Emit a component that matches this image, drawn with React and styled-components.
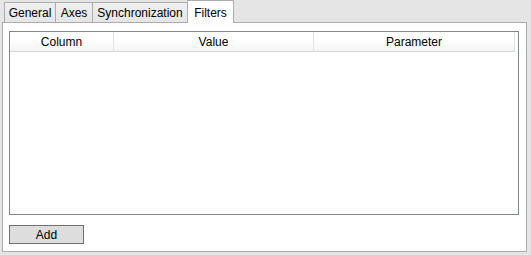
import React from "react";
import styled, { createGlobalStyle } from "styled-components";

const GlobalStyle = createGlobalStyle`
  html, body {
    margin: 0;
    padding: 0;
    background: #e5e5e5;
  }
  * {
    box-sizing: border-box;
  }
`;

const tabs = [
  { label: "General", width: 52 },
  { label: "Axes", width: 38 },
  { label: "Synchronization", width: 96 },
  { label: "Filters", width: 47, active: true },
];

const columns = [
  { label: "Column", width: 104 },
  { label: "Value", width: 200 },
  { label: "Parameter", width: 201 },
];

export default function App() {
  return (
    <>
      <GlobalStyle />
      <Window>
        <TabStrip>
          {tabs.map((t) => (
            <Tab key={t.label} $width={t.width} $active={t.active}>
              {t.label}
            </Tab>
          ))}
        </TabStrip>
        <Panel>
          <Grid>
            <HeaderRow>
              {columns.map((c) => (
                <HeaderCell key={c.label} $width={c.width}>
                  {c.label}
                </HeaderCell>
              ))}
            </HeaderRow>
            <GridBody />
          </Grid>
          <AddButton>Add</AddButton>
        </Panel>
      </Window>
    </>
  );
}

const Window = styled.div`
  width: 531px;
  height: 255px;
  padding-left: 2px;
  font-family: "Segoe UI", "Liberation Sans", sans-serif;
  font-size: 12px;
  color: #000;
`;

const TabStrip = styled.div`
  display: flex;
  align-items: flex-end;
  height: 22px;
  padding-left: 2px;
`;

const Tab = styled.div`
  position: relative;
  z-index: ${(p) => (p.$active ? 1 : 0)};
  display: flex;
  align-items: center;
  justify-content: center;
  width: ${(p) => p.$width}px;
  height: ${(p) => (p.$active ? 23 : 20)}px;
  margin-left: -1px;
  margin-bottom: ${(p) => (p.$active ? -1 : 0)}px;
  padding-top: 1px;
  border: 1px solid #acacac;
  border-bottom: none;
  background: ${(p) =>
    p.$active ? "#fff" : "linear-gradient(#f0f0f0, #e5e5e5)"};
  white-space: nowrap;
  &:first-child {
    margin-left: 0;
  }
`;

const Panel = styled.div`
  display: flex;
  flex-direction: column;
  width: 525px;
  height: 230px;
  padding: 8px 7px 7px 6px;
  border: 1px solid #acacac;
  background: #fff;
`;

const Grid = styled.div`
  display: flex;
  flex-direction: column;
  width: 510px;
  height: 184px;
  border: 1px solid #828790;
  background: #fff;
`;

const HeaderRow = styled.div`
  display: flex;
  height: 20px;
`;

const HeaderCell = styled.div`
  display: flex;
  align-items: center;
  justify-content: center;
  width: ${(p) => p.$width}px;
  border-right: 1px solid #e2e3ea;
  border-bottom: 1px solid #d5d5d5;
  background: linear-gradient(#ffffff 40%, #f3f4f6);
  padding-top: 1px;
`;

const GridBody = styled.div`
  flex: 1;
`;

const AddButton = styled.button`
  width: 75px;
  height: 19px;
  margin-top: 10px;
  padding: 1px 0 0;
  border: 1px solid #707070;
  border-radius: 0;
  background: #dddddd;
  font: inherit;
  color: #000;
`;
